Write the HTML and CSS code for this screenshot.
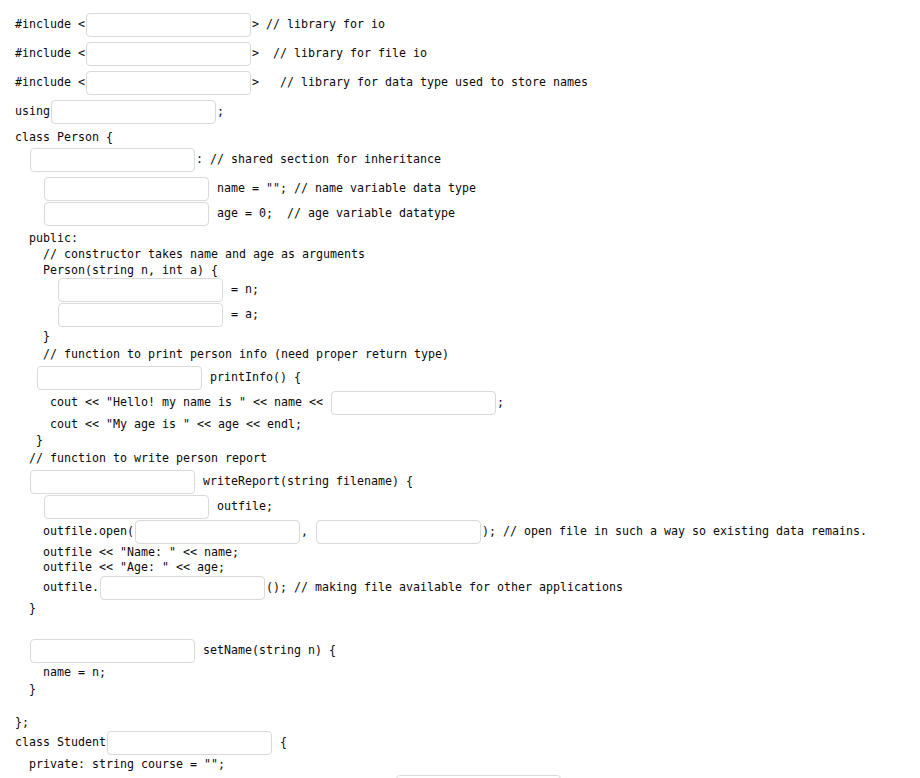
FILE: index.html
```html
<!DOCTYPE html>
<html lang="en">
<head>
<meta charset="utf-8">
<title>C++ fill in the blanks</title>
<link rel="stylesheet" href="styles.css">
</head>
<body>
<div class="code">
<div class="row">#include &lt;<input class="blank" type="text">&gt; // library for io</div>
<div class="row gap5">#include &lt;<input class="blank" type="text">&gt;  // library for file io</div>
<div class="row gap5">#include &lt;<input class="blank" type="text">&gt;   // library for data type used to store names</div>
<div class="row gap5">using<input class="blank" type="text">;</div>
<div class="ln gap5">class Person {</div>
<div class="row gap3">  <input class="blank" type="text">: // shared section for inheritance</div>
<div class="row gap5">    <input class="blank" type="text"> name = ""; // name variable data type</div>
<div class="row gap1">    <input class="blank" type="text"> age = 0;  // age variable datatype</div>
<div class="ln gap4">  public:</div>
<div class="ln">    // constructor takes name and age as arguments</div>
<div class="ln">    Person(string n, int a) {</div>
<div class="row">      <input class="blank" type="text"> = n;</div>
<div class="row gap1">      <input class="blank" type="text"> = a;</div>
<div class="ln gap1">    }</div>
<div class="ln gap2">    // function to print person info (need proper return type)</div>
<div class="row gap4">   <input class="blank" type="text"> printInfo() {</div>
<div class="row gap1">     cout &lt;&lt; "Hello! my name is " &lt;&lt; name &lt;&lt; <input class="blank" type="text">;</div>
<div class="ln gap1">     cout &lt;&lt; "My age is " &lt;&lt; age &lt;&lt; endl;</div>
<div class="ln">   }</div>
<div class="ln gap2">  // function to write person report</div>
<div class="row gap4">  <input class="blank" type="text"> writeReport(string filename) {</div>
<div class="row gap1">    <input class="blank" type="text"> outfile;</div>
<div class="row gap1">    outfile.open(<input class="blank" type="text">, <input class="blank" type="text">); // open file in such a way so existing data remains.</div>
<div class="ln tight gap1">    outfile &lt;&lt; "Name: " &lt;&lt; name;</div>
<div class="ln tight">    outfile &lt;&lt; "Age: " &lt;&lt; age;</div>
<div class="row gap1">    outfile.<input class="blank" type="text">(); // making file available for other applications</div>
<div class="ln">  }</div>
<div class="row gap23">  <input class="blank" type="text"> setName(string n) {</div>
<div class="ln gap1">    name = n;</div>
<div class="ln gap1">  }</div>
<div class="ln gap17">};</div>
<div class="row gap1">class Student<input class="blank" type="text"> {</div>
<div class="ln gap1">  private: string course = "";</div>
<div class="row gap3 tail"><input class="blank" type="text"></div>
</div>
</body>
</html>
```
FILE: styles.css
```css
html, body {
  margin: 0;
  padding: 0;
  background: #ffffff;
}

.code {
  padding: 13px 0 0 15px;
  font-family: "DejaVu Sans Mono", "Liberation Mono", monospace;
  font-size: 11.63px;
  color: #0a0a0a;
  font-variant-ligatures: none;
}

.row {
  height: 24px;
  line-height: 23px;
  white-space: pre;
}

.ln {
  height: 16px;
  line-height: 16px;
  white-space: pre;
}

.ln.tight {
  height: 15px;
  line-height: 15px;
}

.gap1 { margin-top: 1px; }
.gap2 { margin-top: 2px; }
.gap3 { margin-top: 3px; }
.gap4 { margin-top: 4px; }
.gap5 { margin-top: 5px; }
.gap17 { margin-top: 17px; }
.gap23 { margin-top: 23px; }

.tail {
  padding-left: 380px;
}

.blank {
  box-sizing: border-box;
  width: 165px;
  height: 24px;
  margin: 0 1px;
  padding: 0 6px;
  border: 1px solid #dadada;
  border-radius: 4px;
  background: #ffffff;
  vertical-align: top;
  font: inherit;
  outline: none;
}
```
